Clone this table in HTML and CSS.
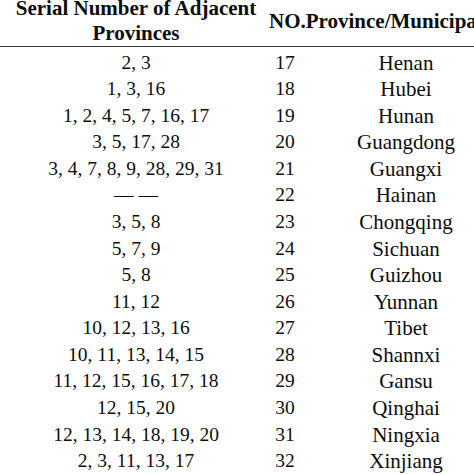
FILE: index.html
```html
<!DOCTYPE html>
<html>
<head>
<meta charset="utf-8">
<link rel="stylesheet" href="styles.css">
</head>
<body>
<div class="table">
  <div class="head">
    <div class="h1">Serial Number of Adjacent<br>Provinces</div>
    <div class="h2">NO.Province/Municipality</div>
  </div>
  <div class="row"><div class="adj">2, 3</div><div class="no">17</div><div class="name">Henan</div></div>
  <div class="row"><div class="adj">1, 3, 16</div><div class="no">18</div><div class="name">Hubei</div></div>
  <div class="row"><div class="adj">1, 2, 4, 5, 7, 16, 17</div><div class="no">19</div><div class="name">Hunan</div></div>
  <div class="row"><div class="adj">3, 5, 17, 28</div><div class="no">20</div><div class="name">Guangdong</div></div>
  <div class="row"><div class="adj">3, 4, 7, 8, 9, 28, 29, 31</div><div class="no">21</div><div class="name">Guangxi</div></div>
  <div class="row"><div class="adj">— —</div><div class="no">22</div><div class="name">Hainan</div></div>
  <div class="row"><div class="adj">3, 5, 8</div><div class="no">23</div><div class="name">Chongqing</div></div>
  <div class="row"><div class="adj">5, 7, 9</div><div class="no">24</div><div class="name">Sichuan</div></div>
  <div class="row"><div class="adj">5, 8</div><div class="no">25</div><div class="name">Guizhou</div></div>
  <div class="row"><div class="adj">11, 12</div><div class="no">26</div><div class="name">Yunnan</div></div>
  <div class="row"><div class="adj">10, 12, 13, 16</div><div class="no">27</div><div class="name">Tibet</div></div>
  <div class="row"><div class="adj">10, 11, 13, 14, 15</div><div class="no">28</div><div class="name">Shannxi</div></div>
  <div class="row"><div class="adj">11, 12, 15, 16, 17, 18</div><div class="no">29</div><div class="name">Gansu</div></div>
  <div class="row"><div class="adj">12, 15, 20</div><div class="no">30</div><div class="name">Qinghai</div></div>
  <div class="row"><div class="adj">12, 13, 14, 18, 19, 20</div><div class="no">31</div><div class="name">Ningxia</div></div>
  <div class="row"><div class="adj">2, 3, 11, 13, 17</div><div class="no">32</div><div class="name">Xinjiang</div></div>
</div>
</body>
</html>
```
FILE: styles.css
```css
html, body {
  margin: 0;
  padding: 0;
  background: #ffffff;
  overflow: hidden;
}
body {
  width: 474px;
  height: 474px;
  font-family: "Liberation Serif", "Times New Roman", serif;
  color: #0d0d0d;
  font-size: 19.5px;
}
.table {
  width: 514px;
  margin-top: -4px;
}
.head {
  display: grid;
  grid-template-columns: 272px 242px;
  align-items: center;
  border-bottom: 1.5px solid #383838;
  font-weight: bold;
  font-size: 21px;
  line-height: 25px;
}
.h1 {
  text-align: center;
  white-space: nowrap;
}
.h2 {
  margin-left: -3px;
  white-space: nowrap;
}
.table .head + .row {
  margin-top: 2.5px;
}
.row {
  display: grid;
  grid-template-columns: 272px 26px 216px;
  height: 26.58px;
  line-height: 26.58px;
  white-space: nowrap;
}
.adj, .no, .name {
  display: flex;
  justify-content: center;
}
.name {
  font-size: 21px;
}
```
